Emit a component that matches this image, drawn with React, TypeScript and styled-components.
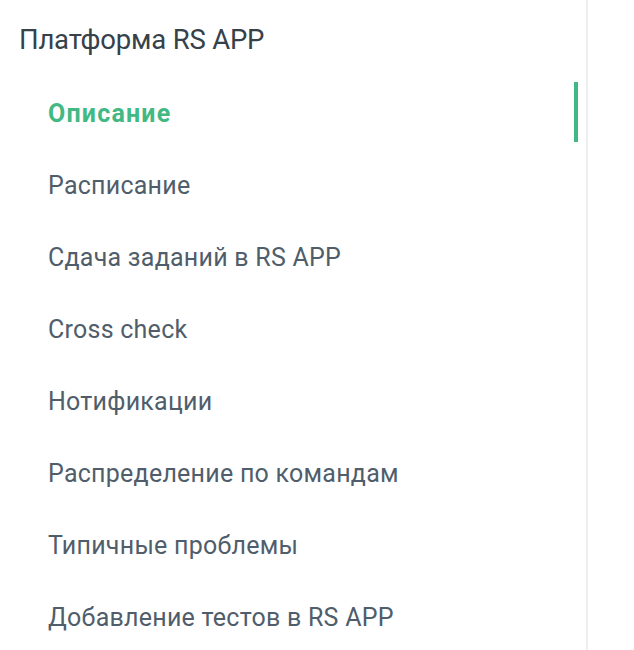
import React from 'react';
import styled, { createGlobalStyle } from 'styled-components';

const GlobalStyle = createGlobalStyle`
  html, body {
    margin: 0;
    padding: 0;
    background: #fff;
  }
  body {
    font-family: Roboto, "Noto Sans", sans-serif;
    -webkit-font-smoothing: antialiased;
  }
`;

const items = [
  'Описание',
  'Расписание',
  'Сдача заданий в RS APP',
  'Cross check',
  'Нотификации',
  'Распределение по командам',
  'Типичные проблемы',
  'Добавление тестов в RS APP',
];

const App = () => {
  return (
    <>
      <GlobalStyle />
      <Sidebar>
        <Title>Платформа RS APP</Title>
        <List>
          {items.map((label, i) => (
            <Item key={label} $active={i === 0}>
              {label}
            </Item>
          ))}
        </List>
      </Sidebar>
    </>
  );
};

const Sidebar = styled.nav`
  width: 586px;
  height: 650px;
  border-right: 2px solid #eee;
  box-sizing: content-box;
  overflow: hidden;
`;

const Title = styled.div`
  padding: 18px 0 0 19px;
  font-size: 27.5px;
  line-height: 44px;
  letter-spacing: -0.2px;
  color: #364149;
`;

const List = styled.ul`
  list-style: none;
  margin: 0;
  padding: 16px 0 0 0;
`;

const Item = styled.li<{ $active?: boolean }>`
  position: relative;
  height: 72px;
  line-height: 72px;
  padding-left: 48px;
  font-size: 25px;
  letter-spacing: ${(p) => (p.$active ? '1.2px' : '0.25px')};
  color: ${(p) => (p.$active ? '#42b983' : '#505d6b')};
  font-weight: ${(p) => (p.$active ? 700 : 400)};
  white-space: nowrap;

  &::after {
    content: '';
    display: ${(p) => (p.$active ? 'block' : 'none')};
    position: absolute;
    right: 8px;
    top: 4px;
    width: 4px;
    height: 60px;
    background: #42b983;
  }
`;

export default App;
